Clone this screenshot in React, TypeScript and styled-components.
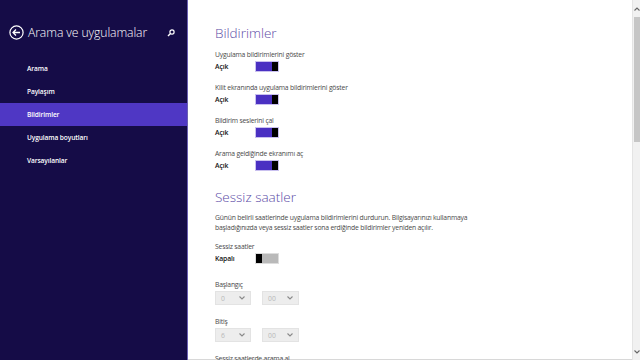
import React from 'react';
import styled, { createGlobalStyle } from 'styled-components';

const GlobalStyle = createGlobalStyle`
  html, body {
    margin: 0;
    padding: 0;
    background: #ffffff;
  }
  * {
    box-sizing: border-box;
  }
`;

const Screen = styled.div`
  display: flex;
  width: 640px;
  height: 360px;
  overflow: hidden;
  font-family: "Open Sans", "Noto Sans", sans-serif;
`;

/* ---------- sidebar ---------- */

const Sidebar = styled.aside`
  width: 188px;
  flex-shrink: 0;
  background: #150c47;
  border-right: 1px solid #6a5fb3;
  display: flex;
  flex-direction: column;
`;

const SidebarHeader = styled.div`
  height: 57px;
  display: flex;
  align-items: center;
  padding: 8px 12px 0 9px;
  color: #ffffff;
`;

const HeaderTitle = styled.h1`
  flex: 1;
  margin: 0 0 0 4px;
  font-size: 12.2px;
  font-weight: 300;
  letter-spacing: -0.1px;
  line-height: 16px;
`;

const NavList = styled.nav`
  display: flex;
  flex-direction: column;
`;

const NavItem = styled.div<{ $active?: boolean }>`
  height: 23px;
  display: flex;
  align-items: center;
  padding-left: 27px;
  font-size: 6.6px;
  font-weight: 600;
  letter-spacing: -0.1px;
  color: #ffffff;
  background: ${p => (p.$active ? '#4f37c4' : 'transparent')};
`;

/* ---------- content ---------- */

const Main = styled.main`
  flex: 1;
  padding: 25px 0 0 27px;
  color: #3a3a3a;
  background: #ffffff;
  border-bottom: 1px solid #d8d8d8;
`;

const SectionTitle = styled.h2<{ $top?: number }>`
  margin: ${p => p.$top ?? 0}px 0 0;
  font-size: 13.5px;
  line-height: 16px;
  font-weight: 300;
  color: #5b4ba6;
`;

const Setting = styled.div<{ $top?: number }>`
  margin-top: ${p => p.$top ?? 0}px;
`;

const Label = styled.div`
  font-size: 6.8px;
  line-height: 10px;
  letter-spacing: -0.2px;
  color: #4a4a4a;
  white-space: nowrap;
`;

const StateRow = styled.div`
  height: 12px;
  display: flex;
  align-items: center;
`;

const StateText = styled.span`
  width: 41px;
  font-size: 6.8px;
  font-weight: 600;
  letter-spacing: -0.1px;
  color: #111111;
`;

const Toggle = styled.span<{ $on: boolean }>`
  display: flex;
  flex-direction: ${p => (p.$on ? 'row' : 'row-reverse')};
  width: 22px;
  height: 9px;
  margin-top: 1px;
  outline: 1px solid ${p => (p.$on ? '#c9c0ef' : '#dddddd')};
`;

const Track = styled.span<{ $on: boolean }>`
  flex: 1;
  background: ${p => (p.$on ? '#4a30c2' : '#b9b9b9')};
`;

const Thumb = styled.span`
  width: 6px;
  background: #000000;
`;

const Paragraph = styled.p`
  margin: 8px 0 0;
  width: 262px;
  font-size: 6.8px;
  line-height: 10px;
  letter-spacing: -0.2px;
  color: #4a4a4a;
`;

const SelectRow = styled.div`
  display: flex;
  gap: 11px;
  margin-top: 1px;
`;

const Select = styled.div<{ $w: number }>`
  width: ${p => p.$w}px;
  height: 14px;
  display: flex;
  align-items: center;
  justify-content: space-between;
  padding: 0 5px;
  background: #ededed;
  border: 1px solid #e3e3e3;
  font-size: 6.8px;
  color: #b8b8b8;
`;

/* ---------- scrollbar ---------- */

const ScrollBar = styled.div`
  width: 8px;
  flex-shrink: 0;
  background: #f1f1f1;
  border-left: 1px solid #e4e4e4;
  display: flex;
  flex-direction: column;
  align-items: center;
`;

const ScrollArrow = styled.div`
  height: 17px;
  display: flex;
  align-items: center;
  justify-content: center;
`;

const ScrollThumb = styled.div`
  width: 6px;
  height: 125px;
  background: #c6c6c6;
`;

const ScrollSpace = styled.div`
  flex: 1;
`;

const Chevron = ({ up = false, color = '#777' }: { up?: boolean; color?: string }) => (
  <svg width="6" height="4" viewBox="0 0 6 4">
    <path d={up ? 'M0.5 3.5 L3 1 L5.5 3.5' : 'M0.5 0.5 L3 3 L5.5 0.5'} fill="none" stroke={color} strokeWidth="1.1" />
  </svg>
);

const BackIcon = () => (
  <svg width="15" height="15" viewBox="0 0 15 15">
    <circle cx="7.5" cy="7.5" r="6.6" fill="none" stroke="#fff" strokeWidth="1.2" />
    <path d="M4 7.5 H11 M7 4.5 L4 7.5 L7 10.5" fill="none" stroke="#fff" strokeWidth="1.3" />
  </svg>
);

const SearchIcon = () => (
  <svg width="8" height="8" viewBox="0 0 8 8">
    <circle cx="5" cy="3" r="2.1" fill="none" stroke="#fff" strokeWidth="1.2" />
    <path d="M3.5 4.5 L1 7" stroke="#fff" strokeWidth="1.5" />
  </svg>
);

const navItems = ['Arama', 'Paylaşım', 'Bildirimler', 'Uygulama boyutları', 'Varsayılanlar'];

const notifications = [
  'Uygulama bildirimlerini göster',
  'Kilit ekranında uygulama bildirimlerini göster',
  'Bildirim seslerini çal',
  'Arama geldiğinde ekranımı aç',
];

const Switch = ({ on }: { on: boolean }) => (
  <Toggle $on={on}>
    <Track $on={on} />
    <Thumb />
  </Toggle>
);

const TimeSelect = ({ value, width }: { value: string; width: number }) => (
  <Select $w={width}>
    <span>{value}</span>
    <Chevron color="#8a8a8a" />
  </Select>
);

export default function App() {
  return (
    <Screen>
      <GlobalStyle />
      <Sidebar>
        <SidebarHeader>
          <BackIcon />
          <HeaderTitle>Arama ve uygulamalar</HeaderTitle>
          <SearchIcon />
        </SidebarHeader>
        <NavList>
          {navItems.map(item => (
            <NavItem key={item} $active={item === 'Bildirimler'}>
              {item}
            </NavItem>
          ))}
        </NavList>
      </Sidebar>

      <Main>
        <SectionTitle>Bildirimler</SectionTitle>
        {notifications.map((label, i) => (
          <Setting key={label} $top={i === 0 ? 9 : 11}>
            <Label>{label}</Label>
            <StateRow>
              <StateText>Açık</StateText>
              <Switch on />
            </StateRow>
          </Setting>
        ))}

        <SectionTitle $top={18}>Sessiz saatler</SectionTitle>
        <Paragraph>
          Günün belirli saatlerinde uygulama bildirimlerini durdurun. Bilgisayarınızı kullanmaya
          başladığınızda veya sessiz saatler sona erdiğinde bildirimler yeniden açılır.
        </Paragraph>

        <Setting $top={9}>
          <Label>Sessiz saatler</Label>
          <StateRow>
            <StateText>Kapalı</StateText>
            <Switch on={false} />
          </StateRow>
        </Setting>

        <Setting $top={16}>
          <Label>Başlangıç</Label>
          <SelectRow>
            <TimeSelect value="0" width={36} />
            <TimeSelect value="00" width={37} />
          </SelectRow>
        </Setting>

        <Setting $top={12}>
          <Label>Bitiş</Label>
          <SelectRow>
            <TimeSelect value="6" width={36} />
            <TimeSelect value="00" width={37} />
          </SelectRow>
        </Setting>

        <Setting $top={12}>
          <Label>Sessiz saatlerde arama al</Label>
        </Setting>
      </Main>

      <ScrollBar>
        <ScrollArrow>
          <Chevron up color="#666" />
        </ScrollArrow>
        <ScrollThumb />
        <ScrollSpace />
        <ScrollArrow>
          <Chevron color="#666" />
        </ScrollArrow>
      </ScrollBar>
    </Screen>
  );
}
